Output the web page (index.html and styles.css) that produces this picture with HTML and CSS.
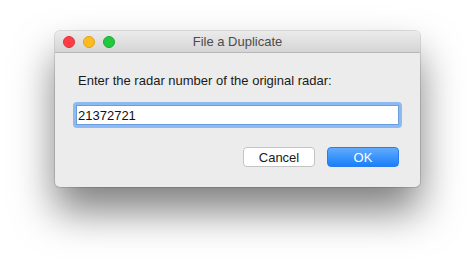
FILE: index.html
```html
<!DOCTYPE html>
<html lang="en">
<head>
    <meta charset="UTF-8">
    <title>File a Duplicate</title>
    <link rel="stylesheet" href="styles.css">
</head>
<body>
    <div class="window">
        <div class="titlebar">
            <div class="lights">
                <span class="light close"></span>
                <span class="light min"></span>
                <span class="light max"></span>
            </div>
            <div class="title">File a Duplicate</div>
        </div>
        <div class="content">
            <p class="prompt">Enter the radar number of the original radar:</p>
            <div class="field">
                <input type="text" value="21372721">
            </div>
            <div class="actions">
                <button class="btn">Cancel</button>
                <button class="btn primary">OK</button>
            </div>
        </div>
    </div>
</body>
</html>
```
FILE: styles.css
```css
html, body {
    margin: 0;
    padding: 0;
    min-height: 100vh;
    background: #fff;
    font-family: "Liberation Sans", Arial, sans-serif;
}

body {
    padding-top: 31px;
    box-sizing: border-box;
}

.window {
    width: 365px;
    height: 156px;
    margin-left: 55px;
    background: #ececec;
    border-radius: 5px;
    box-shadow: 0 0 0 1px rgba(0, 0, 0, 0.12), 0 24px 40px rgba(0, 0, 0, 0.5);
    overflow: hidden;
}

.titlebar {
    position: relative;
    height: 21px;
    background: linear-gradient(#ebebeb, #d5d5d5);
    border-bottom: 1px solid #b8b8b8;
    display: flex;
    align-items: center;
    justify-content: center;
}

.lights {
    position: absolute;
    left: 8px;
    top: 5px;
    display: flex;
    gap: 8px;
}

.light {
    width: 12px;
    height: 12px;
    border-radius: 50%;
    box-sizing: border-box;
}

.close { background: #fc3d45; border: 1px solid #e0323a; }
.min { background: #fdbb20; border: 1px solid #e0a21a; }
.max { background: #22c840; border: 1px solid #1aab33; }

.title {
    font-size: 13px;
    color: #4c4c4c;
}

.content {
    padding: 0 18px 0 18px;
}

.prompt {
    margin: 20px 0 0 5px;
    font-size: 13px;
    color: #1a1a1a;
}

.field {
    margin-top: 14px;
    padding: 3px;
    background: #8ebaf3;
    border-radius: 4px;
}

.field input {
    display: block;
    box-sizing: border-box;
    width: 100%;
    height: 20px;
    margin: 0;
    border: 1px solid #6c9ede;
    padding: 0 1px;
    background: #fff;
    font-family: inherit;
    font-size: 13px;
    color: #111;
    outline: none;
}

.actions {
    display: flex;
    justify-content: flex-end;
    gap: 12px;
    margin-top: 19px;
    padding-right: 3px;
}

.btn {
    width: 72px;
    height: 20px;
    padding: 0;
    border: 1px solid #c4c4c4;
    border-radius: 4px;
    background: #fff;
    font-family: inherit;
    font-size: 13px;
    color: #1a1a1a;
}

.btn.primary {
    border-color: #2a7cf0;
    background: linear-gradient(#62abfd, #1880f9);
    color: #fff;
}
```
